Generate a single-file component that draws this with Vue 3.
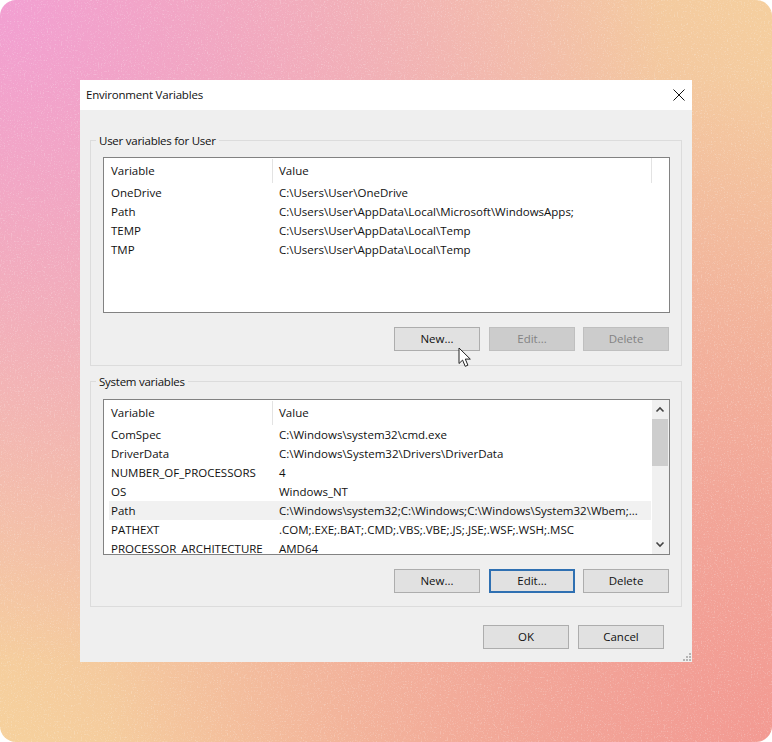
<script setup>
const userVars = [
  { name: 'OneDrive', value: 'C:\\Users\\User\\OneDrive' },
  { name: 'Path', value: 'C:\\Users\\User\\AppData\\Local\\Microsoft\\WindowsApps;' },
  { name: 'TEMP', value: 'C:\\Users\\User\\AppData\\Local\\Temp' },
  { name: 'TMP', value: 'C:\\Users\\User\\AppData\\Local\\Temp' }
]

const systemVars = [
  { name: 'ComSpec', value: 'C:\\Windows\\system32\\cmd.exe' },
  { name: 'DriverData', value: 'C:\\Windows\\System32\\Drivers\\DriverData' },
  { name: 'NUMBER_OF_PROCESSORS', value: '4' },
  { name: 'OS', value: 'Windows_NT' },
  { name: 'Path', value: 'C:\\Windows\\system32;C:\\Windows;C:\\Windows\\System32\\Wbem;...', selected: true },
  { name: 'PATHEXT', value: '.COM;.EXE;.BAT;.CMD;.VBS;.VBE;.JS;.JSE;.WSF;.WSH;.MSC' },
  { name: 'PROCESSOR_ARCHITECTURE', value: 'AMD64' }
]
</script>

<template>
  <div class="page">
    <svg class="noise" width="772" height="742" aria-hidden="true">
      <filter id="speckle">
        <feTurbulence type="fractalNoise" baseFrequency="0.7" numOctaves="2" seed="4" />
        <feColorMatrix values="0 0 0 0 1  0 0 0 0 1  0 0 0 0 1  0 0 0 4 -2.2" />
      </filter>
      <rect width="772" height="742" filter="url(#speckle)" opacity="0.22" />
    </svg>

    <div class="dialog">
      <div class="titlebar">
        <span class="title">Environment Variables</span>
        <svg class="close" width="12" height="12" viewBox="0 0 12 12">
          <path d="M.5.5l11 11M11.5.5l-11 11" stroke="#111" stroke-width="1" fill="none" />
        </svg>
      </div>

      <div class="body">
        <fieldset class="group">
          <legend>User variables for User</legend>
          <div class="list">
            <div class="list-main">
              <div class="list-head">
                <span class="col-name">Variable</span>
                <span class="col-value">Value</span>
              </div>
              <div v-for="row in userVars" :key="row.name" class="row">
                <span class="col-name">{{ row.name }}</span>
                <span class="col-value">{{ row.value }}</span>
              </div>
            </div>
            <div class="list-end"></div>
          </div>
          <div class="actions">
            <button class="btn">New...</button>
            <button class="btn disabled">Edit...</button>
            <button class="btn disabled">Delete</button>
          </div>
        </fieldset>

        <fieldset class="group second">
          <legend>System variables</legend>
          <div class="list">
            <div class="list-main">
              <div class="list-head">
                <span class="col-name">Variable</span>
                <span class="col-value">Value</span>
              </div>
              <div v-for="row in systemVars" :key="row.name" class="row" :class="{ selected: row.selected }">
                <span class="col-name">{{ row.name }}</span>
                <span class="col-value">{{ row.value }}</span>
              </div>
            </div>
            <div class="scrollbar">
              <svg class="arrow" width="16" height="19" viewBox="0 0 16 19">
                <path d="M4.5 11.5L8 8l3.5 3.5" stroke="#444" stroke-width="1.6" fill="none" />
              </svg>
              <div class="thumb-slot"><div class="thumb"></div></div>
              <svg class="arrow" width="16" height="19" viewBox="0 0 16 19">
                <path d="M4.5 7.5L8 11l3.5-3.5" stroke="#444" stroke-width="1.6" fill="none" />
              </svg>
            </div>
          </div>
          <div class="actions">
            <button class="btn">New...</button>
            <button class="btn focused">Edit...</button>
            <button class="btn">Delete</button>
          </div>
        </fieldset>

        <div class="footer">
          <button class="btn">OK</button>
          <button class="btn">Cancel</button>
        </div>
      </div>

      <svg class="grip" width="10" height="10" viewBox="0 0 10 10">
        <path d="M7 1h2v2H7zM4 4h2v2H4zM7 4h2v2H7zM1 7h2v2H1zM4 7h2v2H4zM7 7h2v2H7z" fill="#b5b5b5" />
      </svg>
    </div>

    <svg class="cursor" width="14" height="21" viewBox="0 0 14 21">
      <path d="M1 1v15.5l3.6-3.4 2.6 6.2 2.7-1.1-2.6-6.1h5z" fill="#fff" stroke="#222" stroke-width="1" stroke-linejoin="round" />
    </svg>
  </div>
</template>

<style scoped>
.page {
  position: relative;
  width: 772px;
  height: 742px;
  box-sizing: border-box;
  padding: 80px;
  border-radius: 16px;
  overflow: hidden;
  background:
    radial-gradient(circle at 0 0, #f29fd2 0, rgba(242, 159, 210, 0) 62%),
    radial-gradient(circle at 100% 100%, #f39a92 0, rgba(243, 154, 146, 0) 62%),
    linear-gradient(45deg, #f6d19c 0%, #efb3a4 50%, #f5cf9e 100%);
  font-family: "Open Sans", "Noto Sans", sans-serif;
  font-size: 11.5px;
  color: #111;
}

.noise {
  position: absolute;
  left: 0;
  top: 0;
}

.dialog {
  position: relative;
  width: 612px;
  height: 582px;
  background: #efefef;
}

.titlebar {
  display: flex;
  justify-content: space-between;
  align-items: center;
  height: 30px;
  box-sizing: border-box;
  padding: 0 7px 2px 6px;
  background: #fff;
}

.title {
  letter-spacing: -0.2px;
}

.close {
  margin-top: 1px;
}

.body {
  padding: 23px 10px 0;
}

.group {
  margin: 0;
  min-width: 0;
  padding: 10px 11px 14px 12px;
  border: 1px solid #dcdcdc;
}

.group legend {
  height: 14px;
  margin-left: -7px;
  padding: 0 3px;
  line-height: 16px;
  letter-spacing: -0.25px;
}

.second {
  margin-top: 8px;
  padding-top: 11px;
  padding-bottom: 13px;
}

.list {
  display: flex;
  height: 156px;
  box-sizing: border-box;
  border: 1px solid #828282;
  background: #fff;
  overflow: hidden;
}

.list-main {
  flex: 1;
  min-width: 0;
  padding-left: 5px;
}

.list-head {
  display: flex;
  height: 25px;
  align-items: center;
}

.list-head .col-name {
  height: 24px;
  line-height: 24px;
  border-right: 1px solid #e3e3e3;
}

.row {
  display: flex;
  height: 19px;
  line-height: 19px;
  white-space: nowrap;
}

.row.selected {
  background: #f1f1f1;
}

.col-name {
  width: 161px;
  flex-shrink: 0;
  padding-left: 2px;
}

.col-value {
  padding-left: 6px;
}

.row .col-value {
  padding-left: 7px;
}

.list-end {
  width: 18px;
  height: 25px;
  box-sizing: border-box;
  border-left: 1px solid #e3e3e3;
}

.scrollbar {
  display: flex;
  flex-direction: column;
  width: 16px;
  margin-left: 1px;
  padding-right: 1px;
  background: #f0f0f0;
}

.arrow {
  flex-shrink: 0;
}

.thumb-slot {
  flex: 1;
}

.thumb {
  height: 47px;
  background: #cdcdcd;
}

.actions {
  display: flex;
  justify-content: flex-end;
  gap: 8px;
  margin-top: 14px;
  padding-right: 1px;
}

.actions .btn:first-child {
  margin-right: 1px;
}

.btn {
  width: 86px;
  height: 24px;
  box-sizing: border-box;
  padding: 0 0 2px;
  border: 1px solid #adadad;
  background: #e1e1e1;
  color: #111;
  font: inherit;
}

.btn.disabled {
  border-color: #bfbfbf;
  background: #cccccc;
  color: #838383;
}

.btn.focused {
  border: 2px solid #2f70b2;
}

.footer {
  display: flex;
  justify-content: flex-end;
  gap: 9px;
  margin-top: 18px;
  padding-right: 18px;
}

.grip {
  position: absolute;
  right: 0;
  bottom: 0;
}

.cursor {
  position: absolute;
  left: 458px;
  top: 347px;
}
</style>
